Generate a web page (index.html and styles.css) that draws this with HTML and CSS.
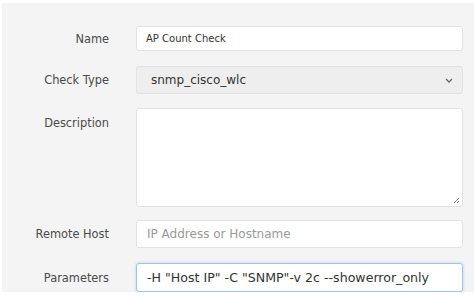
FILE: index.html
```html
<!DOCTYPE html>
<html>
<head>
<meta charset="utf-8">
<link rel="stylesheet" href="styles.css">
</head>
<body>
<div class="panel">
  <div class="row row-name">
    <label class="lbl">Name</label>
    <div class="field field-name">AP Count Check</div>
  </div>
  <div class="row row-type">
    <label class="lbl">Check Type</label>
    <div class="field field-select">
      <span>snmp_cisco_wlc</span>
      <svg class="chev" width="8" height="5" viewBox="0 0 8 5"><path d="M1 1 L4 4 L7 1" fill="none" stroke="#666" stroke-width="1.3"/></svg>
    </div>
  </div>
  <div class="row row-desc">
    <label class="lbl lbl-top">Description</label>
    <div class="field field-area">
      <svg class="grip" width="7" height="7" viewBox="0 0 7 7"><path d="M1 6 L6 1 M4 6 L6 4" stroke="#888" stroke-width="0.9"/></svg>
    </div>
  </div>
  <div class="row row-host">
    <label class="lbl">Remote Host</label>
    <div class="field placeholder">IP Address or Hostname</div>
  </div>
  <div class="row row-params">
    <label class="lbl">Parameters</label>
    <div class="field field-focus">-H "Host IP" -C "SNMP"-v 2c --showerror_only</div>
  </div>
</div>
</body>
</html>
```
FILE: styles.css
```css
html, body {
  margin: 0;
  padding: 0;
  background: #ffffff;
  width: 474px;
  height: 297px;
  overflow: hidden;
}
.panel {
  margin: 3px 0 0 2px;
  height: 289px;
  background: #f4f4f4;
  padding-top: 23px;
  box-sizing: border-box;
  font-family: "DejaVu Sans", Verdana, sans-serif;
  overflow: hidden;
}
.row {
  display: grid;
  grid-template-columns: 107px 327px;
  column-gap: 27px;
  align-items: center;
}
.row-name { margin-bottom: 15px; }
.row-type { margin-bottom: 14px; }
.row-desc { margin-bottom: 13px; align-items: start; }
.row-host { margin-bottom: 15px; }
.lbl {
  text-align: right;
  font-size: 11.4px;
  color: #4a4a4a;
}
.lbl-top { padding-top: 8px; }
.field {
  box-sizing: border-box;
  height: 28px;
  background: #fff;
  border: 1px solid #e2e2e2;
  border-radius: 3px;
  padding: 0 10px;
  display: flex;
  align-items: center;
  font-size: 12px;
  color: #333;
  white-space: nowrap;
  position: relative;
}
.field-name {
  height: 25px;
  font-size: 10px;
  padding-left: 9px;
}
.field-select {
  background: #eeeeee;
  padding-left: 14px;
  justify-content: space-between;
  padding-right: 9px;
}
.field-area {
  height: 99px;
}
.grip {
  position: absolute;
  right: 2px;
  bottom: 2px;
}
.placeholder { color: #999; }
.field-focus {
  height: 29px;
  font-size: 12.6px;
  border-color: #9fc4ea;
  box-shadow: 0 0 3px rgba(102, 160, 230, 0.45);
}
```
